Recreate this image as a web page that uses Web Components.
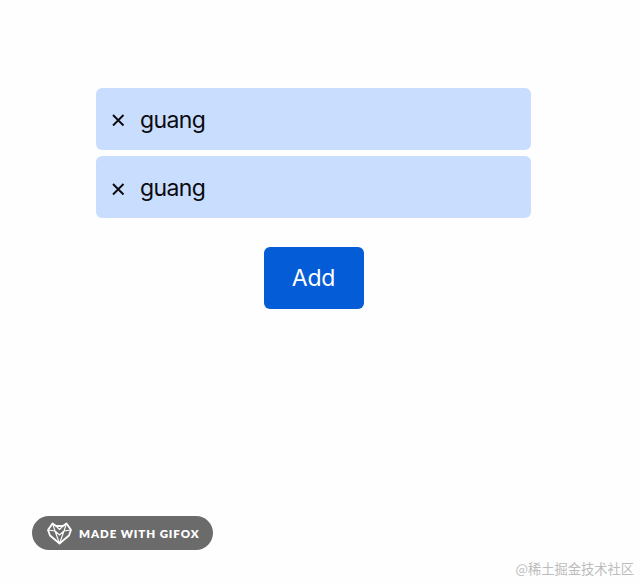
<!DOCTYPE html>
<html>
<head>
<meta charset="utf-8">
<style>
  html, body { margin: 0; height: 100%; background: #fefefe; overflow: hidden; }
  body { font-family: Inter, "Liberation Sans", sans-serif; }
</style>
</head>
<body>
<todo-app>
  <todo-item>guang</todo-item>
  <todo-item>guang</todo-item>
</todo-app>
<gifox-badge></gifox-badge>
<site-mark></site-mark>
<script>
class TodoItem extends HTMLElement {
  constructor() {
    super();
    this.attachShadow({ mode: 'open' });
    this.shadowRoot.innerHTML = `
      <style>
        :host {
          display: flex;
          align-items: center;
          height: 62px;
          box-sizing: border-box;
          padding-left: 15px;
          background: #c9defe;
          border-radius: 6px;
          color: #0a0a0f;
          font-size: 23px;
          letter-spacing: -0.6px;
        }
        svg { width: 14px; height: 14px; flex: none; margin-right: 15px; margin-top: 3px; }
        span { position: relative; top: 1px; }
      </style>
      <svg viewBox="0 0 14 14"><path d="M2 2 L12.5 12.5 M12.5 2 L2 12.5" stroke="#0a0a0f" stroke-width="1.9" fill="none"/></svg>
      <span><slot></slot></span>
    `;
  }
}

class TodoApp extends HTMLElement {
  constructor() {
    super();
    this.attachShadow({ mode: 'open' });
    this.shadowRoot.innerHTML = `
      <style>
        :host {
          display: flex;
          flex-direction: column;
          width: 435px;
          padding: 87.5px 0 0 96px;
        }
        .list { display: flex; flex-direction: column; gap: 6.5px; }
        button {
          align-self: center;
          width: 100px;
          height: 62px;
          margin-top: 29px;
          border: 0;
          border-radius: 6px;
          background: #045dd6;
          color: #fff;
          font: 23px Inter, "Liberation Sans", sans-serif;
          letter-spacing: -0.2px;
        }
      </style>
      <div class="list"><slot></slot></div>
      <button>Add</button>
    `;
  }
}

class GifoxBadge extends HTMLElement {
  constructor() {
    super();
    this.attachShadow({ mode: 'open' });
    this.shadowRoot.innerHTML = `
      <style>
        :host {
          position: absolute;
          left: 32px;
          top: 516px;
          width: 181px;
          height: 34px;
          box-sizing: border-box;
          padding-left: 15px;
          display: flex;
          align-items: center;
          gap: 7px;
          background: #6b6b6b;
          border-radius: 17px;
          color: #fff;
          font: 800 11.5px Lato, "Open Sans", sans-serif;
          letter-spacing: 0.9px;
          white-space: nowrap;
        }
        svg { width: 25px; height: 23px; flex: none; }
      </style>
      <svg viewBox="0 0 25 23" fill="none" stroke="#fff" stroke-width="1.8" stroke-linejoin="round">
        <path d="M5.5 1.5 L9 4 H16 L19.5 1.5 L24 8 L22 13.5 L12.5 21.5 L3 13.5 L1 8 Z"/>
        <path d="M5.5 1.5 L8 9 L12.5 21.5 L17 9 L19.5 1.5 M1 8 L8 9 L12.5 13 L17 9 L24 8 M9 4 L12.5 7.5 L16 4" stroke-width="1.1"/>
      </svg>
      <span>MADE WITH GIFOX</span>
    `;
  }
}

class SiteMark extends HTMLElement {
  constructor() {
    super();
    this.attachShadow({ mode: 'open' });
    this.shadowRoot.innerHTML = `
      <style>
        :host {
          position: absolute;
          right: 6px;
          top: 560px;
          color: #bcbcbc;
          font: 13.25px "Noto Sans CJK SC", sans-serif;
          line-height: 18px;
          white-space: nowrap;
        }
      </style>
      <span>@稀土掘金技术社区</span>
    `;
  }
}

customElements.define('todo-item', TodoItem);
customElements.define('todo-app', TodoApp);
customElements.define('gifox-badge', GifoxBadge);
customElements.define('site-mark', SiteMark);
</script>
</body>
</html>
